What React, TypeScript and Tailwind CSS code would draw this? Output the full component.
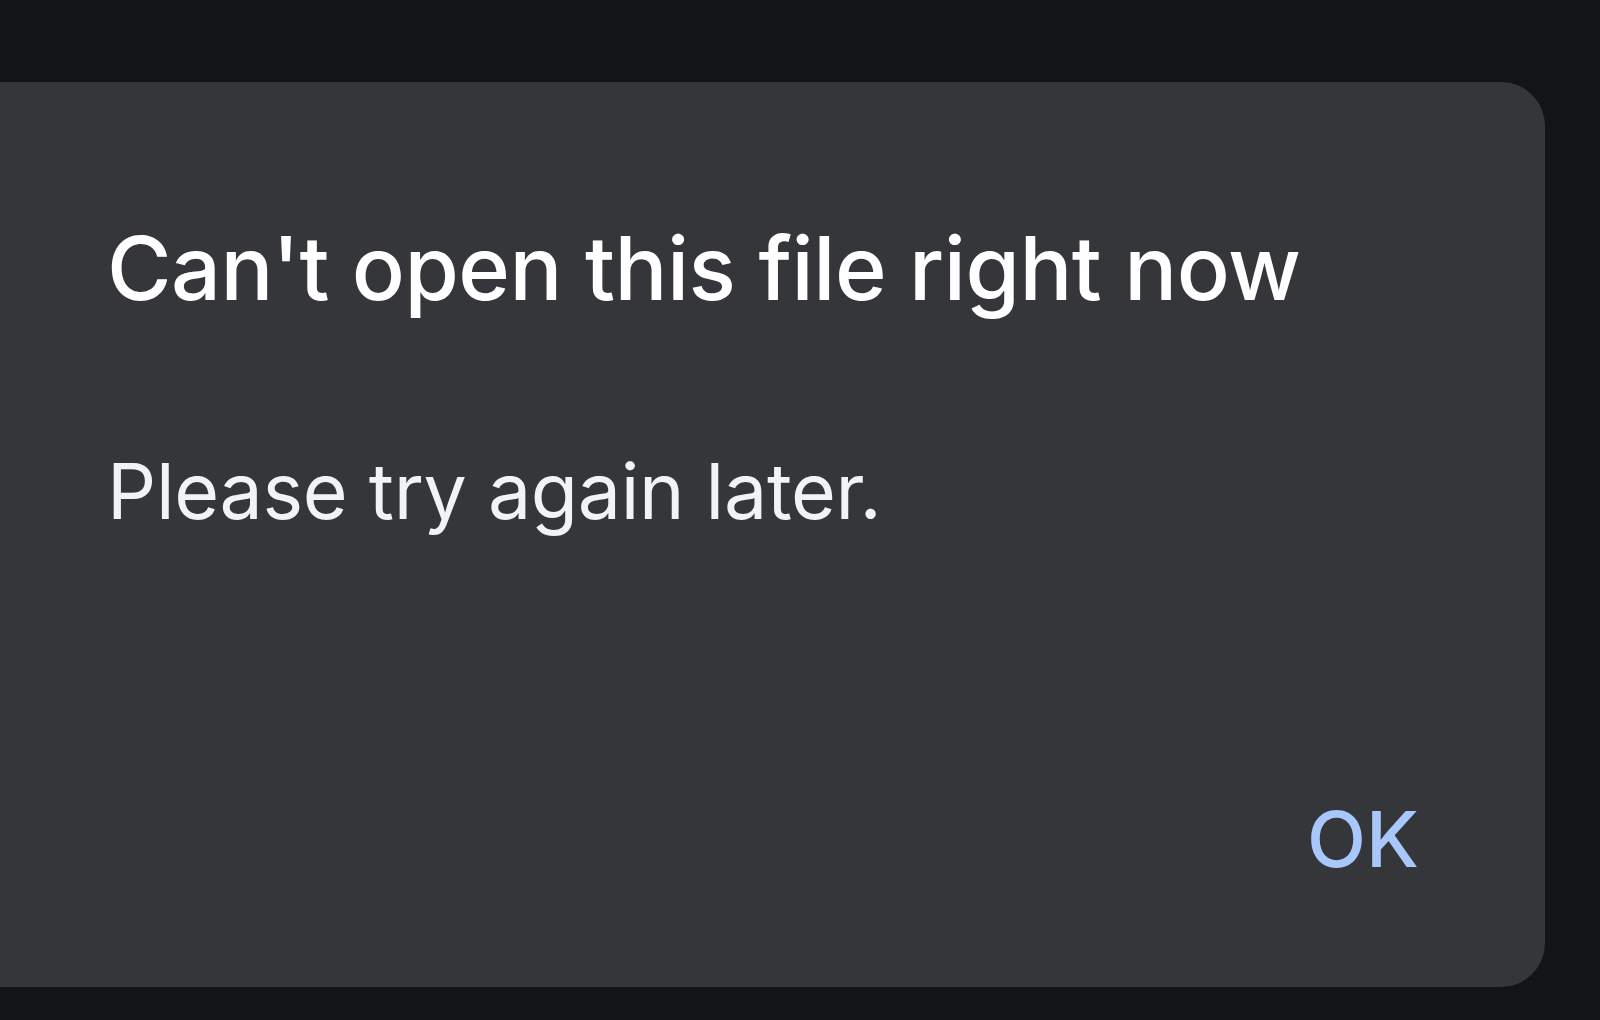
export default function App() {
    return (
        <div className="h-[1020px] w-[1600px] overflow-hidden bg-[#131416] pt-[82px]">
            <div
                className="-ml-[50px] flex h-[905px] w-[1595px] flex-col rounded-[44px] bg-[#35363a] pl-[157px] pr-[126px] pt-[142px] pb-[109px] text-white"
                style={{ fontFamily: "Inter, 'Open Sans', sans-serif" }}
            >
                <h1 className="text-[88px] font-medium leading-none tracking-[-0.5px]">
                    Can't open this file right now
                </h1>
                <p className="mt-[141px] text-[77px] leading-none tracking-[-0.3px] text-[#f1f3f4]">
                    Please try again later.
                </p>
                <div className="mt-auto flex justify-end">
                    <button className="text-[77px] font-medium leading-none text-[#a8c7fa]">
                        OK
                    </button>
                </div>
            </div>
        </div>
    );
}
